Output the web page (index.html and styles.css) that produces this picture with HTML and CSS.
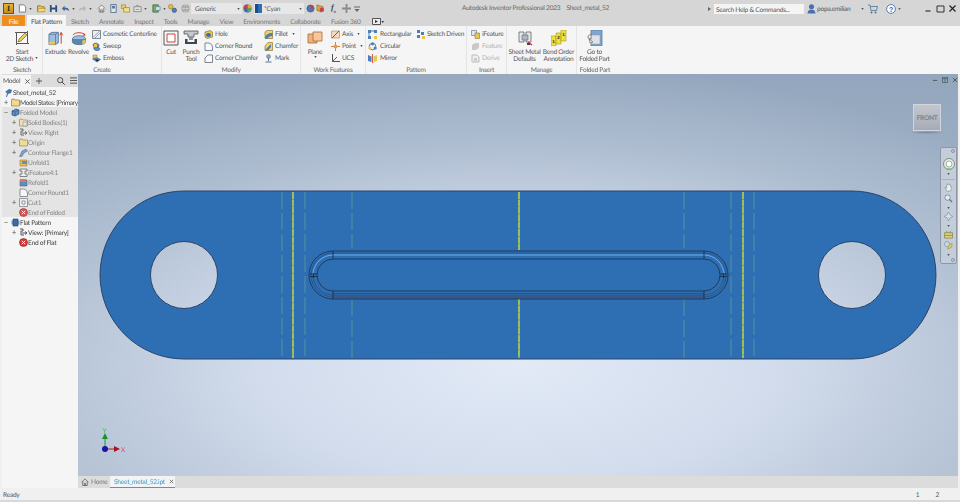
FILE: index.html
```html
<!DOCTYPE html>
<html lang="en">
<head>
<meta charset="utf-8">
<title>Autodesk Inventor Professional 2023 - Sheet_metal_52</title>
<link rel="stylesheet" href="styles.css">
</head>
<body>
<svg class="defs" width="0" height="0" aria-hidden="true">
  <symbol id="folder" viewBox="0 0 9 9"><path d="M.5 2V8H8.5V2H4L3 1H1Z" fill="#f2d98b" stroke="#8f7a3c" stroke-width=".7"/></symbol>
  <symbol id="view" viewBox="0 0 9 9"><path d="M1 1H4V3H2V7H5M3 5H8M6 3.500L8 5L6 6.500" fill="none" stroke="#555" stroke-width="1"/></symbol>
  <symbol id="end" viewBox="0 0 9 9"><circle cx="4.500" cy="4.500" r="4" fill="#d43b3b" stroke="#8d2020" stroke-width=".6"/><path d="M2.800 2.800 6.200 6.200M6.200 2.800 2.800 6.200" stroke="#fff" stroke-width="1"/></symbol>
  <symbol id="part" viewBox="0 0 9 9"><path d="M1 3 5 1 8 2V6L4 8 1 7Z" fill="#5c8fc4" stroke="#2c4f7c" stroke-width=".7"/><path d="M1 3 4 4V8M4 4 8 2" fill="none" stroke="#2c4f7c" stroke-width=".5"/></symbol>
  <symbol id="dd" viewBox="0 0 4 3"><path d="M0 0H4L2 3Z" fill="#555"/></symbol>
</svg>
<div class="app">
  <header class="titlebar">
    <div class="logo">I</div>
    <div class="qat">
      <svg class="q" viewBox="0 0 10 10"><path d="M1.500 1H6.500L8.500 3V9H1.500Z" fill="#fff" stroke="#777"/></svg><svg class="qd m2" viewBox="0 0 4 3"><use href="#dd"/></svg>
      <svg class="q m5" viewBox="0 0 10 10"><path d="M.5 2H4L5 3H8V8.500H.5Z" fill="#e8c34d" stroke="#9c7d1e"/><path d="M2 5H9.500L8 8.500H.5Z" fill="#f4dc83" stroke="#9c7d1e" stroke-width=".5"/></svg>
      <svg class="q m3" viewBox="0 0 10 10"><path d="M1 1H8L9 2V9H1Z" fill="#2d4f7a"/><path d="M3 1H7V4H3ZM3 6H7V9H3Z" fill="#dce6f1"/></svg>
      <svg class="q m3" viewBox="0 0 10 10"><path d="M1 5 4 2V4C7 4 9 5 9 8 8 6.500 6 6 4 6V8Z" fill="#3d6796"/></svg><svg class="qd m2" viewBox="0 0 4 3"><use href="#dd"/></svg>
      <svg class="q m3 dim" viewBox="0 0 10 10"><path d="M9 5 6 2V4C3 4 1 5 1 8 2 6.500 4 6 6 6V8Z" fill="#aaa"/></svg><svg class="qd m2" viewBox="0 0 4 3"><use href="#dd"/></svg>
      <svg class="q m5" viewBox="0 0 10 10"><path d="M1 5 5 1 9 5M2.500 4.500V9H7.500V4.500M4 9V6.500H6V9" fill="#eee" stroke="#666" stroke-width=".8"/></svg>
      <svg class="q m3" viewBox="0 0 10 10"><path d="M2 .5H8V9.500H2Z" fill="#dfe6ee" stroke="#53708f"/><path d="M3.500 2H6.500V5H3.500Z" fill="#53708f"/></svg>
      <svg class="q m3" viewBox="0 0 10 10"><path d="M.5 1H5V5H.5Z" fill="#f0d36b" stroke="#96791e" stroke-width=".7"/><path d="M3 4H9.500V9H3Z" fill="#f5e08a" stroke="#96791e" stroke-width=".7"/></svg>
      <svg class="q m3" viewBox="0 0 10 10"><path d="M1 3H9V8.500H1Z" fill="#e6e6e6" stroke="#888"/><path d="M3 3 5 1 7 3M3 6H7" fill="none" stroke="#888"/></svg><svg class="qd m2" viewBox="0 0 4 3"><use href="#dd"/></svg>
      <svg class="q m5" viewBox="0 0 10 10"><path d="M1 1H7V9H1Z" fill="#7daa6c" stroke="#45703a"/><path d="M4 3H9V7H4Z" fill="#d7e6f2" stroke="#4b7aa6" stroke-width=".7"/></svg><svg class="qd m2" viewBox="0 0 4 3"><use href="#dd"/></svg>
      <svg class="q m2" viewBox="0 0 10 10"><circle cx="3" cy="3" r="2.500" fill="#e7bd3c" stroke="#8a6e19" stroke-width=".6"/><circle cx="7" cy="7" r="2.500" fill="#4c7fb5" stroke="#2c4f7c" stroke-width=".6"/></svg>
      <svg class="q m4" viewBox="0 0 10 10"><circle cx="5" cy="5" r="4.500" fill="#a3a3a3"/><path d="M1 5H9M5 .5C2.500 3 2.500 7 5 9.500 7.500 7 7.500 3 5 .5" fill="none" stroke="#e4e4e4" stroke-width=".6"/></svg>
      <div class="combo combo-a">Generic<svg class="qd" viewBox="0 0 4 3"><use href="#dd"/></svg></div>
      <svg class="q m1" viewBox="0 0 10 10"><circle cx="5" cy="5" r="4.500" fill="#3f6ca8"/><path d="M5 .5A4.500 4.500 0 0 1 9.500 5H5Z" fill="#d9a92c"/><path d="M.5 5A4.500 4.500 0 0 1 5 .5V5Z" fill="#c7414a"/><path d="M5 5H9.500A4.500 4.500 0 0 1 5 9.500Z" fill="#5aa564"/></svg>
      <div class="combo combo-b"><svg class="swatch" viewBox="0 0 7 9"><path d="M0 0H7V9H0Z" fill="#2d6fb4"/><path d="M0 0H3V9H0Z" fill="#1e4c83"/></svg>*Cyan<svg class="qd" viewBox="0 0 4 3"><use href="#dd"/></svg></div>
      <svg class="q m2" viewBox="0 0 10 10"><circle cx="5" cy="5" r="4" fill="#4a78b5" stroke="#364f73" stroke-width=".6"/><path d="M5 1A4 4 0 0 1 9 5H5Z" fill="#c7414a"/></svg>
      <svg class="q m1" viewBox="0 0 10 10"><path d="M1 1 8 3 6 9 1 7Z" fill="#d8a43a" stroke="#80601c" stroke-width=".6"/><circle cx="6.500" cy="6.500" r="2.500" fill="#c7414a"/></svg>
      <span class="fx">f<sub>x</sub></span>
      <svg class="q plus" viewBox="0 0 10 10"><path d="M4 0H6V4H10V6H6V10H4V6H0V4H4Z" fill="#8b8b8b"/></svg>
      <svg class="q-menu" viewBox="0 0 6 6"><path d="M0 .5H6V1.500H0ZM.5 3H5.500L3 6Z" fill="#666"/></svg>
    </div>
    <div class="doc-title"><span>Autodesk Inventor Professional 2023</span><span>Sheet_metal_52</span></div>
    <div class="title-right">
      <svg class="tri" viewBox="0 0 3 4"><path d="M0 0 3 2 0 4Z" fill="#666"/></svg>
      <div class="search">Search Help &amp; Commands...</div>
      <svg class="user" viewBox="0 0 10 11"><circle cx="5" cy="3" r="2.800" fill="#4a6fae"/><path d="M.5 10.500C1 7 3 6 5 6S9 7 9.500 10.500Z" fill="#4a6fae"/></svg>
      <span class="uname">popa.emilian</span>
      <svg class="qd m3" viewBox="0 0 4 3"><use href="#dd"/></svg>
      <svg class="cart" viewBox="0 0 10 10"><path d="M0 1H2L3 6.500H8.500L9.500 2.500H2.500" fill="#c8d8e6" stroke="#53708f" stroke-width=".8"/><circle cx="3.500" cy="8.500" r="1" fill="#53708f"/><circle cx="7.500" cy="8.500" r="1" fill="#53708f"/></svg>
      <svg class="help" viewBox="0 0 10 10"><circle cx="5" cy="5" r="4.400" fill="#fff" stroke="#4a6fae" stroke-width=".9"/><text x="5" y="7.500" text-anchor="middle" class="help-q">?</text></svg>
      <svg class="qd m2" viewBox="0 0 4 3"><use href="#dd"/></svg>
      <div class="winbtns">
        <svg viewBox="0 0 9 9"><path d="M1.500 7H6.500" stroke="#333" stroke-width="1.200"/></svg>
        <svg viewBox="0 0 9 9"><path d="M1 2H8V8H1Z" fill="none" stroke="#333"/></svg>
        <svg viewBox="0 0 9 9"><path d="M1.500 1.500 7.500 7.500M7.500 1.500 1.500 7.500" stroke="#222" stroke-width="1.200"/></svg>
      </div>
    </div>
  </header>

  <nav class="tabs">
    <span class="tab file">File</span>
    <span class="tab active">Flat Pattern</span>
    <span class="tab">Sketch</span>
    <span class="tab">Annotate</span>
    <span class="tab">Inspect</span>
    <span class="tab">Tools</span>
    <span class="tab">Manage</span>
    <span class="tab">View</span>
    <span class="tab">Environments</span>
    <span class="tab">Collaborate</span>
    <span class="tab">Fusion 360</span>
    <svg class="tab-extra" viewBox="0 0 12 7"><path d="M.5.500H8.500V6.500H.5Z" fill="#eee" stroke="#555"/><path d="M3 2 6 3.500 3 5Z" fill="#333"/><path d="M9.500 3H12L10.750 5Z" fill="#333"/></svg>
  </nav>

  <section class="ribbon">
    <div class="panel p-sketch">
      <div class="body">
        <div class="big w-start">
          <svg class="lg" viewBox="0 0 16 16"><path d="M2.500 2.500H13.500V13.500H2.500Z" fill="#f7f7f7" stroke="#555"/><path d="M1 2.500H2.500M13.500 1V2.500M2.500 13.500V15M13.500 13.500H15" stroke="#555"/><path d="M4 12 5 9 11 3 13 5 7 11Z" fill="#eecb5a" stroke="#7d6517" stroke-width=".7"/></svg>
          <span>Start</span><span>2D Sketch<svg class="qd inline" viewBox="0 0 4 3"><use href="#dd"/></svg></span>
        </div>
      </div>
      <div class="label">Sketch</div>
    </div>
    <div class="panel p-create">
      <div class="body">
        <div class="big w-ext">
          <svg class="lg" viewBox="0 0 17 16"><path d="M1 4 4 2H11V13L8 15H1Z" fill="#9dbedd" stroke="#47688c" stroke-width=".8"/><path d="M1 12H8V15H1Z" fill="#e9c652"/><path d="M8 4V15M1 4H8L11 2" fill="none" stroke="#47688c" stroke-width=".7"/><path d="M14 14V3M12.500 5 14 2 15.500 5" fill="none" stroke="#c8362f" stroke-width="1"/></svg>
          <span>Extrude</span>
        </div>
        <div class="big w-rev">
          <svg class="lg" viewBox="0 0 17 16"><ellipse cx="8.500" cy="9" rx="7" ry="3.500" fill="#9dbedd" stroke="#47688c" stroke-width=".8"/><path d="M1.500 9V12C1.500 16 15.500 16 15.500 12V9" fill="#5e86ad" stroke="#47688c" stroke-width=".8"/><path d="M12 11 15.500 9.500V13L12 15Z" fill="#e9c652"/><path d="M2 5C4 1.500 13 1.500 15 5M13.500 2.800 15 5 12.500 5" fill="none" stroke="#c8362f"/></svg>
          <span>Revolve</span>
        </div>
        <div class="col c-create">
          <div class="small"><svg class="ic" viewBox="0 0 9 9"><path d="M.5.500H8.500V8.500H.5Z" fill="#e8eef4" stroke="#7d8894"/><path d="M1 7.500 7.500 1M3 8 8 3" stroke="#7d8894" stroke-width=".7"/></svg>Cosmetic Centerline</div>
          <div class="small"><svg class="ic" viewBox="0 0 9 9"><path d="M1 3C1 1 5 .5 6 2 8 3 7 5 5 5 8 5 9 8 6 8.500 3 9 1 7 2 5Z" fill="#5c8fc4" stroke="#2c4f7c" stroke-width=".6"/><path d="M2 2H5V5H2Z" fill="#e9c652"/></svg>Sweep</div>
          <div class="small"><svg class="ic" viewBox="0 0 9 9"><path d="M.5 5 4 3 8.500 5.500 5 8Z" fill="#5c8fc4" stroke="#2c4f7c" stroke-width=".5"/><path d="M1 1H5V4H1Z" fill="#e9c652" stroke="#7d6517" stroke-width=".4"/><path d="M3 5 7 6 5 7.500Z" fill="#222"/></svg>Emboss</div>
        </div>
      </div>
      <div class="label">Create</div>
    </div>
    <div class="panel p-modify">
      <div class="body">
        <div class="big w-cut">
          <svg class="lg" viewBox="0 0 16 16"><path d="M1 1H15V15H1Z" fill="#f8f8f8" stroke="#555"/><path d="M4 4H12V12H4Z" fill="#fff" stroke="#c8423c" stroke-width="1"/></svg>
          <span>Cut</span>
        </div>
        <div class="big w-punch">
          <svg class="lg" viewBox="0 0 16 16"><path d="M1 1H15V4H11V7H5V4H1Z" fill="#c4c9cf" stroke="#444" stroke-width=".7"/><path d="M6 7H10V10H6Z" fill="#8d949c"/><path d="M2 9V14H14V9H11.500V12H4.500V9Z" fill="#3f4650"/></svg>
          <span>Punch</span><span>Tool</span>
        </div>
        <div class="col c-hole">
          <div class="small"><svg class="ic" viewBox="0 0 9 9"><path d="M1 2 6 .5 8.500 2V7L3 8.500 1 7Z" fill="#e9c652" stroke="#7d6517" stroke-width=".6"/><ellipse cx="4.500" cy="5" rx="2.500" ry="2" fill="#3f6ca8"/></svg>Hole</div>
          <div class="small"><svg class="ic" viewBox="0 0 9 9"><path d="M1 8.500V1H4C7 1 8.500 3 8.500 6V8.500Z" fill="#f9f9f9" stroke="#54708e" stroke-width=".8"/></svg>Corner Round</div>
          <div class="small"><svg class="ic" viewBox="0 0 9 9"><path d="M1 8.500V4L4 1H8.500V8.500Z" fill="#f9f9f9" stroke="#667" stroke-width=".8"/></svg>Corner Chamfer</div>
        </div>
        <div class="col c-fillet">
          <div class="small"><svg class="ic" viewBox="0 0 9 9"><path d="M1 2 3 .5H8.500V8.500H1Z" fill="#f0d36b" stroke="#7d6517" stroke-width=".6"/><path d="M1 8.500C1 5 4 3 8.500 3V6C6 6 4 7 4 8.500Z" fill="#4c7fb5"/></svg>Fillet<svg class="qd inline wide" viewBox="0 0 4 3"><use href="#dd"/></svg></div>
          <div class="small"><svg class="ic" viewBox="0 0 9 9"><path d="M1 4 4 .5H8.500V8.500H1Z" fill="#f0d36b" stroke="#7d6517" stroke-width=".6"/><path d="M1 8 7 2V5L4 8.500Z" fill="#4c7fb5"/></svg>Chamfer</div>
          <div class="small"><svg class="ic" viewBox="0 0 9 9"><circle cx="4.500" cy="2.500" r="2" fill="#8da3bb" stroke="#54708e" stroke-width=".5"/><path d="M4 4H5V7H4Z" fill="#54708e"/><path d="M1.500 8H7.500" stroke="#54708e"/></svg>Mark</div>
        </div>
      </div>
      <div class="label">Modify</div>
    </div>
    <div class="panel p-work">
      <div class="body">
        <div class="big w-plane">
          <svg class="lg" viewBox="0 0 16 16"><path d="M1 4H10V13H1Z" fill="#f1b27e" stroke="#a56a34" stroke-width=".8"/><path d="M6 2H15V11H6Z" fill="#f6c79f" stroke="#a56a34" stroke-width=".8"/></svg>
          <span>Plane</span><svg class="qd" viewBox="0 0 4 3"><use href="#dd"/></svg>
        </div>
        <div class="col c-axis">
          <div class="small"><svg class="ic" viewBox="0 0 9 9"><path d="M.5 1H8.500V8H.5Z" fill="#f6d9be" stroke="#b67b45" stroke-width=".6"/><path d="M1 8 8 1" stroke="#c8362f"/></svg>Axis<svg class="qd inline wide" viewBox="0 0 4 3"><use href="#dd"/></svg></div>
          <div class="small"><svg class="ic" viewBox="0 0 9 9"><path d="M4.500 0V9M0 4.500H9" stroke="#d78436" stroke-width="1"/><circle cx="4.500" cy="4.500" r="2" fill="#e89a4a"/></svg>Point<svg class="qd inline wide" viewBox="0 0 4 3"><use href="#dd"/></svg></div>
          <div class="small"><svg class="ic" viewBox="0 0 9 9"><path d="M1.500 0V7.500H9" fill="none" stroke="#555"/><path d="M1.500 7.500 6 3" stroke="#c8362f"/></svg>UCS</div>
        </div>
      </div>
      <div class="label">Work Features</div>
    </div>
    <div class="panel p-pattern">
      <div class="body">
        <div class="col c-rect">
          <div class="small"><svg class="ic" viewBox="0 0 9 9"><path d="M1 1H8M1 1V8" stroke="#4c7fb5"/><path d="M0 0H3V3H0ZM6 0H9V3H6ZM0 6H3V9H0Z" fill="#4c7fb5"/><path d="M6 6H9V9H6Z" fill="#e9c652"/></svg>Rectangular</div>
          <div class="small"><svg class="ic" viewBox="0 0 9 9"><circle cx="4.500" cy="4.500" r="3.300" fill="none" stroke="#4c7fb5"/><circle cx="4.500" cy="1.800" r="1.600" fill="#4c7fb5"/><circle cx="1.800" cy="6" r="1.600" fill="#e9c652"/><circle cx="7.200" cy="6" r="1.600" fill="#4c7fb5"/></svg>Circular</div>
          <div class="small"><svg class="ic" viewBox="0 0 9 9"><path d="M0 1 3.500 2.500V8L0 7Z" fill="#4c7fb5"/><path d="M9 1 5.500 2.500V8L9 7Z" fill="#e9c652"/><path d="M4.500 0V9" stroke="#c8362f" stroke-width=".8"/></svg>Mirror</div>
        </div>
        <div class="col c-driven">
          <div class="small"><svg class="ic" viewBox="0 0 9 9"><path d="M1 0H4V3H1ZM5 2H8V5H5ZM1 5H4V8H1Z" fill="#4c7fb5"/><path d="M6 6H9V9H6Z" fill="#e9c652"/></svg>Sketch Driven</div>
        </div>
      </div>
      <div class="label">Pattern</div>
    </div>
    <div class="panel p-insert">
      <div class="body">
        <div class="col c-insert">
          <div class="small"><svg class="ic" viewBox="0 0 9 9"><path d="M.5.500H5.500V5.500H.5Z" fill="#dfe6ee" stroke="#54708e" stroke-width=".6"/><path d="M4 3H8.500V8.500H4Z" fill="#e9c652" stroke="#7d6517" stroke-width=".5"/></svg>iFeature</div>
          <div class="small off"><svg class="ic" viewBox="0 0 9 9"><path d="M1 3 4 1H8V6L5 8H1Z" fill="#c9c9c9"/></svg>Feature</div>
          <div class="small off"><svg class="ic" viewBox="0 0 9 9"><path d="M1 1H6L8 3V8H1Z" fill="#eee" stroke="#bbb"/><path d="M3 4H6V7H3Z" fill="#ccc"/></svg>Derive</div>
        </div>
      </div>
      <div class="label">Insert</div>
    </div>
    <div class="panel p-manage">
      <div class="body">
        <div class="big w-smd">
          <svg class="lg" viewBox="0 0 16 16"><path d="M2 2H7V12H2ZM9 2H14V12H9Z" fill="#e4e8ec" stroke="#555" stroke-width=".7"/><path d="M5 5H11V10H5Z" fill="#aab7c4" stroke="#555" stroke-width=".5"/><path d="M11 12 15 15" stroke="#c8362f" stroke-width="1.400"/><path d="M10 13H13V15H10Z" fill="#294a7a"/></svg>
          <span>Sheet Metal</span><span>Defaults</span>
        </div>
        <div class="big w-bend">
          <svg class="lg" viewBox="0 0 16 16"><path d="M0 6H5V16H0Z" fill="#f1de3c" stroke="#a6951c" stroke-width=".6"/><path d="M5 3H10V14H5Z" fill="#f1de3c" stroke="#a6951c" stroke-width=".6"/><path d="M10 0H15V11H10Z" fill="#f1de3c" stroke="#a6951c" stroke-width=".6"/><text x="2.500" y="13" class="bend-n">1</text><text x="7.500" y="9" class="bend-n">2</text><text x="12.500" y="6" class="bend-n">1</text></svg>
          <span>Bend Order</span><span>Annotation</span>
        </div>
      </div>
      <div class="label">Manage</div>
    </div>
    <div class="panel p-folded">
      <div class="body">
        <div class="big w-goto">
          <svg class="lg" viewBox="0 0 16 16"><path d="M4 0H15V16H4Z" fill="#7da7d2" stroke="#4b739f" stroke-width=".7"/><path d="M4 5H13V14H4Z" fill="#dfe3e8" stroke="#8a929b" stroke-width=".5"/><path d="M1 6 4 4V9L1 8ZM2 9 6 12 3 13Z" fill="#f1f1f1" stroke="#555" stroke-width=".6"/></svg>
          <span>Go to</span><span>Folded Part</span>
        </div>
      </div>
      <div class="label">Folded Part</div>
    </div>
    <div class="panel-rest"></div>
  </section>

  <main class="workspace">
    <aside class="browser">
      <div class="browser-tabs">
        <div class="b-tab">Model<svg class="b-x" viewBox="0 0 6 6"><path d="M.5.500 5.500 5.500M5.500.500 .5 5.500" stroke="#444"/></svg></div>
        <svg class="b-plus" viewBox="0 0 7 7"><path d="M3 0H4V3H7V4H4V7H3V4H0V3H3Z" fill="#555"/></svg>
        <svg class="b-search" viewBox="0 0 8 8"><circle cx="3.200" cy="3.200" r="2.600" fill="none" stroke="#444" stroke-width=".9"/><path d="M5 5 7.700 7.700" stroke="#444"/></svg>
        <svg class="b-menu" viewBox="0 0 8 7"><path d="M0 .5H8M0 3.500H8M0 6.500H8" stroke="#444"/></svg>
      </div>
      <div class="tree">
        <div class="row root"><svg class="ti" viewBox="0 0 9 9"><path d="M1 4 5 1 8 2 7 5 4 6 3 9H2L3 5Z" fill="#4474a6"/></svg><span>Sheet_metal_52</span></div>
        <div class="row l0"><i class="exp">+</i><svg class="ti" viewBox="0 0 9 9"><use href="#folder"/></svg><span class="tight">Model States: [Primary]</span></div>
        <div class="group">
          <div class="row l0"><i class="exp">−</i><svg class="ti" viewBox="0 0 9 9"><use href="#part"/></svg><span>Folded Model</span></div>
          <div class="row l1"><i class="exp">+</i><svg class="ti" viewBox="0 0 9 9"><path d="M.5 2V8H8.500V2H4L3 1H1Z" fill="#f2e0a8" stroke="#8f7a3c" stroke-width=".7"/><path d="M4 4H8V8H4Z" fill="#dfe6ee" stroke="#777" stroke-width=".5"/></svg><span>Solid Bodies(1)</span></div>
          <div class="row l1"><i class="exp">+</i><svg class="ti" viewBox="0 0 9 9"><use href="#view"/></svg><span>View: Right</span></div>
          <div class="row l1"><i class="exp">+</i><svg class="ti" viewBox="0 0 9 9"><use href="#folder"/></svg><span>Origin</span></div>
          <div class="row l1"><i class="exp">+</i><svg class="ti" viewBox="0 0 9 9"><path d="M.5 8.500 3 3 7 1 8.500 3 5 5 3 8.500Z" fill="#6d97c2" stroke="#3c5e85" stroke-width=".6"/></svg><span>Contour Flange1</span></div>
          <div class="row l1"><i class="exp"></i><svg class="ti" viewBox="0 0 9 9"><path d="M1 2H8V8H1Z" fill="#edb341" stroke="#946a19" stroke-width=".6"/><path d="M3 3H8V6H3Z" fill="#4c7fb5"/></svg><span>Unfold1</span></div>
          <div class="row l1"><i class="exp">+</i><svg class="ti" viewBox="0 0 9 9"><path d="M1 1H8V3H6V6H8V8.500H1V6H3V3H1Z" fill="#eee" stroke="#444" stroke-width=".7"/></svg><span>iFeature4:1</span></div>
          <div class="row l1"><i class="exp"></i><svg class="ti" viewBox="0 0 9 9"><path d="M1 2H8V8H1Z" fill="#4c7fb5" stroke="#2c4f7c" stroke-width=".6"/><path d="M1 1H7V4H1Z" fill="#d8674f"/></svg><span>Refold1</span></div>
          <div class="row l1"><i class="exp"></i><svg class="ti" viewBox="0 0 9 9"><path d="M1 8.500V1H4C7 1 8.500 3 8.500 6V8.500Z" fill="#fafafa" stroke="#555" stroke-width=".7"/></svg><span>Corner Round1</span></div>
          <div class="row l1"><i class="exp">+</i><svg class="ti" viewBox="0 0 9 9"><path d="M.5.500H8.500V8.500H.5Z" fill="#f2f2f2" stroke="#666" stroke-width=".7"/><path d="M3 3H6V6H3Z" fill="#fff" stroke="#3c5e85" stroke-width=".7"/></svg><span>Cut1</span></div>
          <div class="row l1"><i class="exp"></i><svg class="ti" viewBox="0 0 9 9"><use href="#end"/></svg><span>End of Folded</span></div>
        </div>
        <div class="row l0 strong"><i class="exp">−</i><svg class="ti" viewBox="0 0 9 9"><path d="M.5 2.500H2V6.500H.5ZM7 2.500H8.500V6.500H7Z" fill="#7da7d2"/><path d="M2 1H7V8H2Z" fill="#3f6ca8" stroke="#1f3f69" stroke-width=".6"/></svg><span>Flat Pattern</span></div>
        <div class="row l1 strong"><i class="exp">+</i><svg class="ti" viewBox="0 0 9 9"><use href="#view"/></svg><span>View: [Primary]</span></div>
        <div class="row l1 strong"><i class="exp"></i><svg class="ti" viewBox="0 0 9 9"><use href="#end"/></svg><span>End of Flat</span></div>
      </div>
    </aside>
    <div class="canvas-col">
      <div class="canvas">
        <svg class="scene" viewBox="78 74 880 402">
          <path fill-rule="evenodd" class="sheet" d="M184 191H852A84 84 0 0 1 852 359H184A84 84 0 0 1 184 191ZM184 241.500A33.500 33.500 0 1 0 184 308.500A33.500 33.500 0 1 0 184 241.500ZM852 241.500A33.500 33.500 0 1 0 852 308.500A33.500 33.500 0 1 0 852 241.500Z"/>
          <path class="dash" d="M282 192V358M305 192V358M352 192V248M352 299V358M684 192V248M684 299V358M731 192V358M754 192V358"/>
          <path class="bend" d="M293 192V358M743 192V358M519 192V250M519 298V358"/>
          <path class="band-low" d="M333 295H704V299H333Z"/>
          <path class="slot" d="M333 251H704A24 24 0 0 1 704 299H333A24 24 0 0 1 333 251Z"/>
          <path class="slot-thin" d="M333 253H704A22 22 0 0 1 704 297H333A22 22 0 0 1 333 253Z"/>
          <path class="slot-thin" d="M313 275A20 20 0 0 0 333 295H704A20 20 0 0 0 724 275"/>
          <path class="slot-hi" d="M313 275A20 20 0 0 1 333 255H704A20 20 0 0 1 724 275"/>
          <path class="slot" d="M333 259H704A16 16 0 0 1 704 291H333A16 16 0 0 1 333 259Z"/>
          <path class="slot-thin" d="M333 293.500H704"/>
          <path class="tick" d="M333 251V259M333 291V299M704 251V259M704 291V299M310 274H317M310 276.500H317M313.500 273V278M720 274H727M720 276.500H727M723.500 273V278"/>
          <g class="gizmo">
            <path class="gz-y" d="M105 449V438"/><path class="gz-yh" d="M102 439 105 433 108 439Z"/>
            <path class="gz-x" d="M105 449H115"/><path class="gz-xh" d="M114 446 120 449 114 452Z"/>
            <circle class="gz-o" cx="105" cy="449" r="3"/>
            <text class="gz-ly" x="102.500" y="433">Y</text><text class="gz-lx" x="121" y="452">X</text>
          </g>
        </svg>
        <div class="view-ctl">
          <svg viewBox="0 0 7 7"><path d="M1 4H6" stroke="#455" stroke-width="1"/></svg>
          <svg viewBox="0 0 7 7"><path d="M.5.500H6.500V6.500H.5ZM.5 2H6.500M3.500 2V6.500" fill="none" stroke="#455" stroke-width=".8"/></svg>
          <svg viewBox="0 0 7 7"><path d="M1 1 6 6M6 1 1 6" stroke="#455"/></svg>
        </div>
        <div class="cube">FRONT</div>
        <div class="cube-shadow"></div>
        <div class="navbar">
          <i class="nav-dot top"></i>
          <svg class="nav-wheel" viewBox="0 0 12 12"><circle cx="6" cy="6" r="5.500" fill="#e6ece6" stroke="#7e8e80"/><circle cx="6" cy="6" r="3" fill="#fff" stroke="#8d9b90" stroke-width=".8"/><path d="M2 9.500C4 11.500 8 11.500 10 9.500" stroke="#80c080" fill="none"/></svg>
          <svg class="nav-dd" viewBox="0 0 4 3"><use href="#dd"/></svg>
          <i class="nav-sep"></i>
          <svg class="nav-ic" viewBox="0 0 10 10"><path d="M3 9 1 5 2 4.500 3 6V2H4V1H5V1.500H6V2H7V3.500H8V7L7 9Z" fill="#eef0f2" stroke="#7f8a95" stroke-width=".7"/></svg>
          <svg class="nav-ic" viewBox="0 0 10 10"><circle cx="4" cy="4" r="3" fill="#e6ebf0" stroke="#7f8a95"/><path d="M6 6 9 9" stroke="#5e6872" stroke-width="1.400"/></svg>
          <svg class="nav-dd" viewBox="0 0 4 3"><use href="#dd"/></svg>
          <svg class="nav-ic" viewBox="0 0 10 10"><path d="M5 0 6.500 3 10 5 6.500 6.500 5 10 3.500 6.500 0 5 3.500 3Z" fill="#d8dfe7" stroke="#7f8a95" stroke-width=".7"/></svg>
          <svg class="nav-dd" viewBox="0 0 4 3"><use href="#dd"/></svg>
          <svg class="nav-ic" viewBox="0 0 10 10"><path d="M.5 3H9.500V9H.5Z" fill="#d9cf74" stroke="#7e7a3c" stroke-width=".7"/><path d="M3 3V1M7 3V1M.5 6H9.500" stroke="#7e7a3c" stroke-width=".7"/></svg>
          <svg class="nav-ic" viewBox="0 0 10 10"><circle cx="3.500" cy="3.500" r="3" fill="#c7d7ea" stroke="#6c8099" stroke-width=".6"/><path d="M4 9 6 4 9 3 8.500 7Z" fill="#ead24e" stroke="#8a7a1c" stroke-width=".5"/></svg>
          <svg class="nav-dd" viewBox="0 0 4 3"><use href="#dd"/></svg>
          <i class="nav-dot bottom"></i>
        </div>
      </div>
      <div class="doc-tabs">
        <div class="doc-tab home"><svg viewBox="0 0 9 9"><path d="M.5 5 4.500 1 8.500 5M2 4V8.500H7V4M3.800 8.500V6H5.200V8.500" fill="none" stroke="#555" stroke-width=".8"/></svg>Home</div>
        <div class="doc-tab current">Sheet_metal_52.ipt<svg class="doc-x" viewBox="0 0 6 6"><path d="M1 1 5 5M5 1 1 5" stroke="#666"/></svg></div>
      </div>
    </div>
  </main>

  <footer class="status">
    <span>Ready</span>
    <div class="pages"><span>1</span><span>2</span></div>
  </footer>
</div>
</body>
</html>
```

FILE: styles.css
```css
* { box-sizing: border-box; }
html, body { margin: 0; padding: 0; }
body {
  width: 960px;
  height: 502px;
  overflow: hidden;
  background: #f0f0f0;
  font-family: Lato, "Open Sans", "Liberation Sans", sans-serif;
  font-size: 6.600px;
  letter-spacing: -.25px;
  line-height: 1;
  color: #4a4a4a;
  text-rendering: geometricPrecision;
}
svg { display: block; flex: none; }
.defs { position: absolute; }
.app {
  width: 960px;
  height: 502px;
  display: flex;
  flex-direction: column;
  filter: blur(.3px);
}

/* title bar */
.titlebar {
  height: 15px;
  background: #d6d6d6;
  display: flex;
  align-items: center;
  padding: 2px 0 0 3px;
  position: relative;
}
.logo {
  width: 11px;
  height: 11px;
  background: linear-gradient(#e9b42a, #c88f10);
  border: 1px solid #6a5210;
  color: #2c2c2c;
  font: bold 8px/9px "Liberation Serif", serif;
  text-align: center;
  margin-right: 4px;
}
.qat { display: flex; align-items: center; }
.q { width: 9px; height: 9px; }
.m1 { margin-left: 1px; }
.m2 { margin-left: 2px; }
.m3 { margin-left: 3px; }
.m4 { margin-left: 4px; }
.m5 { margin-left: 5px; }
.q-menu { width: 6px; height: 6px; margin-left: 3px; }
.qd { width: 3px; height: 2px; }
.qd.inline { display: inline-block; vertical-align: 2px; margin-left: 2px; }
.qd.wide { margin-left: 4px; margin-top: -1.500px; }
.dim { opacity: .7; }
.combo {
  height: 11px;
  background: #e7e7e7;
  display: flex;
  align-items: center;
  padding: 1px 2px 0 4px;
  justify-content: space-between;
  color: #555;
}
.combo-a { width: 51px; margin-left: 1px; }
.combo-b { width: 50px; padding-left: 1px; margin-left: 2px; }
.swatch { width: 7px; height: 9px; margin-right: 2px; margin-top: -1px; }
.combo-b .qd { margin-left: auto; }
.fx { font: italic bold 8px "Liberation Serif", serif; color: #444; margin-left: 6px; width: 8px; }
.fx sub { font-size: 5px; }
.plus { margin-left: 3px; }
.doc-title {
  position: absolute;
  left: 462px;
  top: 5px;
  display: flex;
  gap: 6px;
  color: #666;
}
.title-right {
  position: absolute;
  left: 708px;
  top: 2px;
  height: 13px;
  display: flex;
  align-items: center;
}
.tri { width: 3px; height: 4px; margin-right: 3px; }
.search {
  width: 90px;
  height: 10px;
  background: #f4f4f4;
  padding: 3px 0 0 2px;
  color: #555;
}
.user { width: 9px; height: 10px; margin-left: 3px; }
.uname { margin-left: 1px; padding-top: 1px; color: #555; width: 41px; }
.cart { width: 10px; height: 10px; margin-left: 4px; }
.help { width: 10px; height: 10px; margin-left: 8px; }
.help-q { font: bold 7px "Liberation Sans", sans-serif; fill: #3d5f99; }
.winbtns {
  display: flex;
  gap: 3px;
  margin-left: 23px;
}
.winbtns svg { width: 9px; height: 9px; }

/* ribbon tabs */
.tabs {
  height: 11px;
  background: #d6d6d6;
  display: flex;
  align-items: stretch;
  padding-left: 2px;
}
.tab { padding: 3.500px 5.100px 0; color: #777; }
.tab.file {
  width: 23px;
  background: #f08e1d;
  color: #fff;
  text-align: center;
  padding: 3.500px 0 0;
  margin-right: 2px;
}
.tab.active { background: #f5f5f5; color: #444; padding: 3.500px 0 0; width: 39px; text-align: center; white-space: nowrap; }
.tab-extra { width: 12px; height: 7px; margin: 3px 0 0 6px; }

/* ribbon */
.ribbon {
  height: 48px;
  background: #f5f5f5;
  display: flex;
  padding: 0 2px;
}
.panel {
  display: flex;
  flex-direction: column;
  border-right: 1px solid #e4e4e4;
}
.panel-rest { flex: 1; }
.body { flex: 1; display: flex; padding-top: 4px; min-height: 0; }
.label { height: 10px; flex: none; text-align: center; color: #666; padding-top: 3px; white-space: nowrap; }
.p-sketch { width: 41px; }
.p-create { width: 119px; }
.p-modify { width: 139px; }
.p-work { width: 65px; }
.p-pattern { width: 101px; }
.p-insert { width: 40px; }
.p-manage { width: 70px; }
.p-folded { width: 36px; border-right: 0; }
.big {
  display: flex;
  flex-direction: column;
  align-items: center;
  white-space: nowrap;
  color: #555;
}
.big > span { height: 7.500px; line-height: 7.500px; }
.lg { width: 16px; height: 16px; margin-bottom: 2.500px; }
.w-start { width: 40px; }
.w-ext { width: 23px; margin-left: 1px; }
.w-rev { width: 23px; }
.w-cut { width: 18px; }
.w-punch { width: 22px; }
.w-plane { width: 28px; }
.w-smd { width: 35px; }
.w-bend { width: 33px; }
.w-goto { width: 35px; }
.col { display: flex; flex-direction: column; margin-top: -2px; }
.small {
  height: 12px;
  display: flex;
  align-items: center;
  white-space: nowrap;
  color: #555;
  padding-top: 1.500px;
}
.small.off { color: #b4b4b4; }
.ic { width: 9px; height: 9px; margin: -1.500px 2px 0 0; }
.c-create { margin-left: 2px; }
.c-hole { width: 60px; margin-left: 2px; }
.c-axis { margin-left: 2px; }
.c-rect { width: 48px; margin-left: 2px; }
.c-rect .ic { margin-right: 3px; }
.c-insert { margin-left: 4px; }

/* workspace */
.workspace { flex: 1; display: flex; min-height: 0; padding: 0 2px; }
.browser { width: 76px; background: #f5f5f5; display: flex; flex-direction: column; }
.browser-tabs {
  height: 13px;
  background: #dcdcdc;
  display: flex;
  align-items: center;
}
.b-tab {
  width: 29px;
  height: 12px;
  margin-top: 1px;
  background: #f5f5f5;
  display: flex;
  align-items: center;
  padding: 1px 0 0 1px;
  color: #555;
}
.b-x { width: 5px; height: 5px; margin: -1px 0 0 5px; }
.b-plus { width: 6px; height: 6px; margin-left: 5px; }
.b-search { width: 8px; height: 8px; margin-left: 15px; }
.b-menu { width: 7px; height: 7px; margin-left: 5px; }
.row { height: 10px; display: flex; align-items: center; white-space: nowrap; color: #444; }
.row span { padding-top: 3px; }
.row .tight { letter-spacing: -.36px; }
.group { background: #e4e4e4; }
.group .row { color: #858585; }
.strong { color: #3a3a3a; }
.root { padding-left: 1px; }
.l1 { padding-left: 8px; }
.exp {
  width: 8px;
  text-align: center;
  font-style: normal;
  color: #555;
  font-size: 8px;
  flex: none;
}
.ti { width: 9px; height: 9px; margin-left: 1px; }
.group .l1 .ti { opacity: .85; }
.canvas-col { flex: 1; display: flex; flex-direction: column; min-width: 0; }
.canvas {
  flex: 1;
  position: relative;
  background:
    radial-gradient(ellipse 640px 300px at 50% 72%, #e2eaf7 0%, #d2dcec 40%, rgba(184, 198, 216, .6) 75%, rgba(170, 184, 204, 0) 100%),
    linear-gradient(#93a6bd, #aebdd0 60%, #b3c1d3);
  overflow: hidden;
}
.scene { position: absolute; inset: 0; width: 880px; height: 402px; }
.sheet { fill: #2e6fb3; stroke: #2b4468; stroke-width: 1; }
.dash { fill: none; stroke: #5a979b; stroke-width: .9; stroke-dasharray: 17 4; }
.bend { fill: none; stroke: #eef220; stroke-width: 1.200; stroke-dasharray: 7 .4; }
.band-low { fill: #3c6399; }
.slot { fill: none; stroke: #1e3555; stroke-width: .9; }
.slot-thin { fill: none; stroke: #234673; stroke-width: .6; }
.slot-hi { fill: none; stroke: #6aaef0; stroke-width: 1; }
.tick { fill: none; stroke: #14263f; stroke-width: .8; }
.gz-y { stroke: #1c9a2c; stroke-width: 1; }
.gz-yh { fill: #18922a; }
.gz-x { stroke: #b01c2a; stroke-width: 1; }
.gz-xh { fill: #a8141e; }
.gz-o { fill: #1616a8; }
.gz-lx, .gz-ly { font: 6.500px Lato, sans-serif; }
.gz-lx { fill: #d8506a; }
.gz-ly { fill: #46b866; }
.view-ctl {
  position: absolute;
  right: 0;
  top: 3px;
  display: flex;
  gap: 4px;
}
.view-ctl svg { width: 6px; height: 6px; }
.cube {
  position: absolute;
  left: 835px;
  top: 30px;
  width: 28px;
  height: 27px;
  background: linear-gradient(#c2c7cf, #a6acb6);
  border: 1px solid #d2d6dc;
  color: #7b828c;
  font: bold 6.500px/27px Lato, sans-serif;
  text-align: center;
}
.cube-shadow {
  position: absolute;
  left: 832px;
  top: 57px;
  width: 34px;
  height: 3px;
  background: radial-gradient(ellipse at center, #7e8796, rgba(126, 135, 150, 0) 75%);
}
.navbar {
  position: absolute;
  left: 862px;
  top: 73px;
  width: 17px;
  height: 117px;
  background: #c4cedb;
  border: 1px solid #8d98a6;
  border-radius: 2px;
  display: flex;
  flex-direction: column;
  align-items: center;
  padding-top: 10px;
}
.nav-dot {
  position: absolute;
  right: 1px;
  width: 4px;
  height: 4px;
  border: 1px solid #8a949f;
  border-radius: 50%;
}
.nav-dot.top { top: 1px; }
.nav-dot.bottom { bottom: 1px; }
.nav-wheel { width: 12px; height: 12px; }
.nav-dd { width: 3px; height: 2px; margin: 3px 0 2px; }
.nav-sep { width: 13px; height: 1px; background: #a8b2bf; margin: 1.500px 0 2px; }
.nav-ic { width: 9px; height: 9px; margin: 1px 0; }
.doc-tabs {
  height: 12px;
  background: #dcdcdc;
  display: flex;
  align-items: stretch;
}
.doc-tab { display: flex; align-items: center; color: #777; white-space: nowrap; padding-top: 1.500px; }
.home { width: 32px; padding-left: 3px; gap: 2px; }
.home svg { width: 8px; height: 8px; margin-top: -1.500px; }
.current {
  width: 65px;
  background: #f1f3f5;
  color: #3c9ac8;
  border-bottom: 1px solid #31a2dc;
  padding-left: 4px;
}
.doc-x { width: 5px; height: 5px; margin: -1px 0 0 4px; }

/* status */
.status {
  height: 14px;
  background: #f0f0f0;
  border-bottom: 2px solid #d8d8d8;
  display: flex;
  align-items: center;
  justify-content: space-between;
  padding: 2px 2px 0 3px;
  color: #555;
}
.pages { display: flex; gap: 16px; margin-right: 19px; }
.bend-n { font: bold 4.500px "Liberation Sans", sans-serif; fill: #333; text-anchor: middle; }
```
